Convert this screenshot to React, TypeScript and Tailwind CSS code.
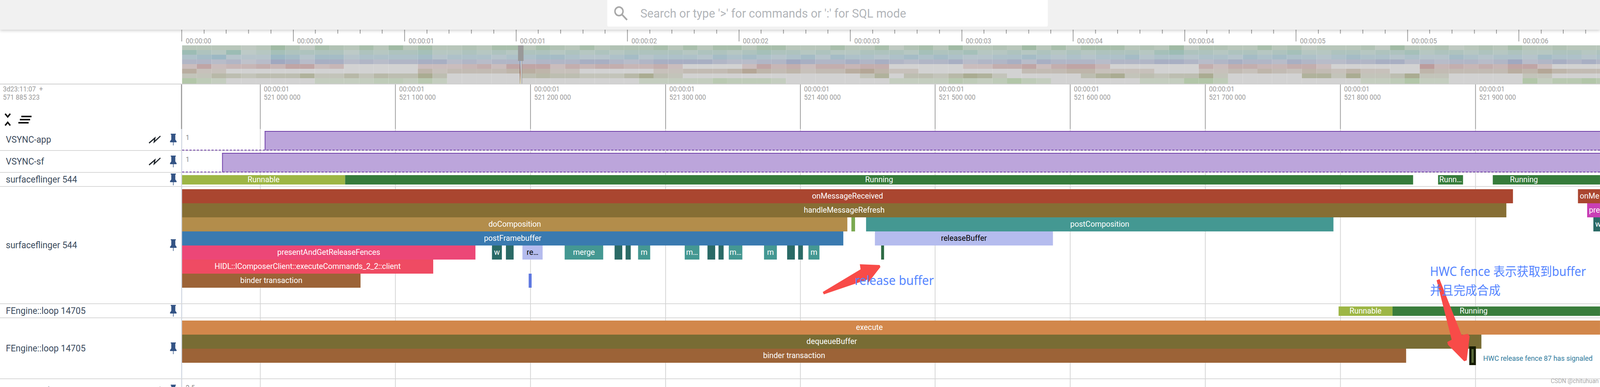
import React from "react";

const X0 = 496;
const EDGE = 4358;
const overviewLabels = ["00:00:00","00:00:00","00:00:01","00:00:01","00:00:02","00:00:02","00:00:03","00:00:03","00:00:04","00:00:04","00:00:05","00:00:05","00:00:06"];
const rulerXs = [708.5,1077,1445,1813,2180,2547,2915,3283,3651,4019];

const heatRows: { strong: number[]; cells: string }[] = [
  { strong: [160,186,164], cells: "2222125314324252" + "422324424324233342424424422" + "242241342522325242444232513" + "322423122231522312324223222" },
  { strong: [156,188,180], cells: "532512433331323" + "3" + "4223232332323233" + "3323323433232233" + "3243342232323233" + "3245332332342233" + "233423323232233232" },
  { strong: [156,184,196], cells: "345222542442333" + "3" + "4233323344322342" + "3332434323424332" + "3434322334323233" + "4233233243433234" + "332322432332433232" },
  { strong: [160,168,192], cells: "332312542442323" + "3" + "4423233233344323" + "4444322335433434" + "3233423342433323" + "3344323433243223" + "344232332352343432" },
  { strong: [188,156,156], cells: "1412232441200000" + "111231444132332231" + "0000" + "1423133233" + "00000" + "1133413442" + "000000" + "313322331" + "000000" + "523232441" + "0000" },
  { strong: [180,166,150], cells: "4110000000000000" + "31222234311" + "00000" + "11" + "222" + "353231" + "2245311" + "0000000" + "222331111" + "000" + "1" + "121321321311" + "00" + "3222224353222" },
  { strong: [170,172,146], cells: "113212224113132" + "252" + "00000" + "23221113521" + "000000000000" + "14" + "0" + "2213541" + "00000" + "245121225" + "1" + "00000" + "44" + "1" + "5" + "11" + "2" + "5" + "11" + "00000" + "11" + "0000" },
  { strong: [172,196,160], cells: "421" + "000000" + "1" + "11122" + "131" + "0000000000000" + "11111" + "32221" + "0000000" + "1111" + "3212421" + "000000" + "111" + "442" + "000000000" + "112" + "4" + "11" + "00000" + "4" + "1" + "3343" },
];

const levels = [0, 0.38, 0.52, 0.66, 0.84, 1];
function heatColor(strong: number[], level: number) {
  const t = levels[level] ?? 0;
  const mix = (v: number) => Math.round(210 + (v - 210) * t);
  return `rgb(${mix(strong[0])},${mix(strong[1])},${mix(strong[2])})`;
}

type Slice = { x1: number; x2: number; row: number; color: string; label?: string; dark?: boolean; left?: boolean; end?: number };

const sfState: Slice[] = [
  { x1: 496, x2: 940, row: 0, color: "bg-[#9db645]", label: "Runnable" },
  { x1: 940, x2: 3849, row: 0, color: "bg-[#367c3b]", label: "Running" },
  { x1: 3917, x2: 3985, row: 0, color: "bg-[#367c3b]", label: "Runn…" },
  { x1: 4066, x2: EDGE, end: 4480, row: 0, color: "bg-[#367c3b]", label: "Running" },
];

const teal = "bg-[#449892]";
const deep = "bg-[#2a6a66]";
const sfMain: Slice[] = [
  { x1: 496, x2: 4121, row: 0, color: "bg-[#aa4630]", label: "onMessageReceived" },
  { x1: 4298, x2: EDGE, row: 0, color: "bg-[#aa4630]", label: "onMe", left: true },
  { x1: 496, x2: 4103, row: 1, color: "bg-[#866e34]", label: "handleMessageRefresh" },
  { x1: 4323, x2: EDGE, row: 1, color: "bg-[#c93fb5]", label: "pre", left: true },
  { x1: 496, x2: 2308, row: 2, color: "bg-[#b38d4b]", label: "doComposition" },
  { x1: 2319, x2: 2329, row: 2, color: "bg-[#7aa950]" },
  { x1: 2359, x2: 3632, row: 2, color: teal, label: "postComposition" },
  { x1: 4340, x2: EDGE, row: 2, color: deep, label: "w", left: true },
  { x1: 496, x2: 2297, row: 3, color: "bg-[#3a7ab0]", label: "postFramebuffer" },
  { x1: 2383, x2: 2868, row: 3, color: "bg-[#b5bcee]", label: "releaseBuffer", dark: true },
  { x1: 496, x2: 1295, row: 4, color: "bg-[#ec4777]", label: "presentAndGetReleaseFences" },
  { x1: 1340, x2: 1367, row: 4, color: deep, label: "w" },
  { x1: 1378, x2: 1399, row: 4, color: deep },
  { x1: 1423, x2: 1478, row: 4, color: "bg-[#b5bcee]", label: "re…", dark: true },
  { x1: 1538, x2: 1643, row: 4, color: teal, label: "merge" },
  { x1: 1674, x2: 1695, row: 4, color: deep },
  { x1: 1704, x2: 1718, row: 4, color: deep },
  { x1: 1738, x2: 1771, row: 4, color: teal, label: "m" },
  { x1: 1865, x2: 1905, row: 4, color: teal, label: "m…" },
  { x1: 1927, x2: 1948, row: 4, color: deep },
  { x1: 1957, x2: 1971, row: 4, color: deep },
  { x1: 1985, x2: 2022, row: 4, color: teal, label: "m…" },
  { x1: 2081, x2: 2116, row: 4, color: teal, label: "m" },
  { x1: 2144, x2: 2165, row: 4, color: deep },
  { x1: 2174, x2: 2187, row: 4, color: deep },
  { x1: 2202, x2: 2232, row: 4, color: teal, label: "m" },
  { x1: 2400, x2: 2408, row: 4, color: "bg-[#2e6b45]" },
  { x1: 496, x2: 1180, row: 5, color: "bg-[#ef4b63]", label: "HIDL::IComposerClient::executeCommands_2_2::client" },
  { x1: 496, x2: 982, row: 6, color: "bg-[#9c6337]", label: "binder transaction" },
  { x1: 1440, x2: 1448, row: 6, color: "bg-[#5e78e0]" },
];

const feState: Slice[] = [
  { x1: 3646, x2: 3793, row: 0, color: "bg-[#9db645]", label: "Runnable" },
  { x1: 3793, x2: EDGE, end: 4481, row: 0, color: "bg-[#3a7d3c]", label: "Running" },
];

const feMain: Slice[] = [
  { x1: 496, x2: EDGE, end: 4476, row: 0, color: "bg-[#d2874b]", label: "execute" },
  { x1: 496, x2: 4035, row: 1, color: "bg-[#786c34]", label: "dequeueBuffer" },
  { x1: 496, x2: 3830, row: 2, color: "bg-[#9c6337]", label: "binder transaction" },
];

function Slices({ items, top, height }: { items: Slice[]; top: number; height: number }) {
  return (
    <>
      {items.map((s, i) => (
        <div
          key={i}
          className={`absolute flex items-center overflow-hidden whitespace-nowrap text-[21px] ${s.color} ${s.dark ? "text-black" : "text-white"} ${s.left ? "justify-start pl-[5px]" : "justify-center"}`}
          style={{
            left: s.x1 - X0,
            width: s.x2 - s.x1,
            top: top + s.row * height,
            height,
            paddingRight: s.end ? s.end - s.x2 : undefined,
          }}
        >
          {s.label}
        </div>
      ))}
    </>
  );
}

function Pin() {
  return (
    <svg width="18" height="30" viewBox="0 0 18 30" className="shrink-0">
      <path d="M2 0h14v2.5h-1.5v12.5l3.5 4.5v2.5H9.8v8H8.2v-8H0v-2.5L3.5 15V2.5H2z" fill="#345485" />
    </svg>
  );
}

function ChartIcon() {
  return (
    <svg width="33" height="22" viewBox="0 0 33 22" className="shrink-0">
      <polyline points="1,20 17,7 15,17 32,2" fill="none" stroke="#1d2329" strokeWidth="3" />
    </svg>
  );
}

function Track({ h, label, chart, children }: { h: string; label: string; chart?: boolean; children?: React.ReactNode }) {
  return (
    <div className={`flex shrink-0 border-b-2 border-[#d8d8d8] ${h}`}>
      <div className="flex w-[496px] shrink-0 items-center border-r-2 border-[#c3cbd9] pl-[16px] pr-[13px]">
        <span className="flex-1 whitespace-nowrap text-[24px] text-[#3c4b5d]">{label}</span>
        {chart && <span className="mr-[25px] flex"><ChartIcon /></span>}
        <Pin />
      </div>
      <div className="relative flex-1">{children}</div>
    </div>
  );
}

function Vsync({ x, top }: { x: number; top: number }) {
  return (
    <>
      <div
        className="absolute right-0 border-l-2 border-t-2 border-[#6f3fa8] bg-[#bca5db]"
        style={{ left: x - X0, top, height: 49 }}
      />
      <div className="absolute inset-x-0 border-b-2 border-dashed border-[#6f3fa8]" style={{ top: top + 48 }} />
      <span className="absolute left-[10px] top-[8px] text-[18px] text-[#888]">1</span>
    </>
  );
}

export default function App() {
  const anno = "[font-family:'Noto_Sans','Noto_Sans_CJK_SC',sans-serif]";
  return (
    <div className="h-[990px] w-full overflow-hidden bg-white">
      <div className="relative flex h-[990px] w-[4358px] origin-top-left scale-x-[0.93987] flex-col overflow-hidden bg-white font-[Roboto]">
        {/* top bar */}
        <div className="relative z-10 flex h-[76px] shrink-0 bg-[#f1f1f1] shadow-[0_2px_8px_rgba(0,0,0,0.22)]">
          <div className="ml-[1654px] flex h-[68px] w-[1200px] items-center rounded-b-[4px] bg-white pl-[18px]">
            <svg width="38" height="38" viewBox="0 0 38 38" className="shrink-0">
              <circle cx="14" cy="14" r="11" fill="none" stroke="#a8a8a8" strokeWidth="4" />
              <line x1="22" y1="22" x2="36" y2="36" stroke="#a8a8a8" strokeWidth="4.5" />
            </svg>
            <span className="ml-[34px] whitespace-nowrap text-[32px] text-[#b2b5b9]">
              Search or type '&gt;' for commands or ':' for SQL mode
            </span>
          </div>
        </div>

        {/* overview */}
        <div className="flex h-[140px] shrink-0 border-b-2 border-[#cfcfcf]">
          <div className="w-[495px] shrink-0" />
          <div className="relative flex-1">
            {overviewLabels.map((t, i) => (
              <React.Fragment key={i}>
                <div className="absolute top-0 h-[30px] w-[2px] bg-[#999]" style={{ left: i * 303.5 - 1 }} />
                {[1, 2, 3, 4].map((m) => (
                  <div key={m} className="absolute top-0 h-[10px] w-[2px] bg-[#999]" style={{ left: i * 303.5 + m * 60.7 - 1 }} />
                ))}
                <span
                  className="absolute top-[18px] whitespace-nowrap text-[18px] leading-[21px] text-[#999]"
                  style={{ left: i * 303.5 + 11 }}
                >
                  {t}
                </span>
              </React.Fragment>
            ))}
            <div className="absolute inset-x-0 top-[40px] flex flex-col overflow-hidden pl-[1px]">
              {heatRows.map((r, ri) => (
                <div key={ri} className="flex h-[12px] last:h-[14px]">
                  {Array.from({ length: 97 }).map((_, c) => (
                    <div
                      key={c}
                      className="h-full w-[40.13px] shrink-0"
                      style={{ backgroundColor: heatColor(r.strong, Number(r.cells[c % r.cells.length])) }}
                    />
                  ))}
                </div>
              ))}
            </div>
            {/* viewport handle */}
            <div className="absolute left-[916px] top-[40px] h-[40px] w-[15px] bg-[#999]" />
            <div className="absolute left-[921px] top-[80px] h-[58px] w-[2px] bg-gradient-to-b from-[#4f7fb8] via-[#7a3a2a] to-[#b5b070]" />
            <div className="absolute left-[923px] top-[80px] h-[58px] w-[2px] bg-white" />
            <div className="absolute left-[925px] top-[80px] h-[58px] w-[2px] bg-[#999]" />
          </div>
        </div>

        {/* ruler */}
        <div className="flex h-[114px] shrink-0">
          <div className="relative w-[496px] shrink-0 border-r-[3px] border-[#999] pl-[8px] pt-[2px] text-[18px] leading-[20.5px] text-[#999]">
            <div className="whitespace-pre">3d23:11:07  +</div>
            <div>571 885 323</div>
            <div className="absolute left-[12px] top-[74px] flex items-start gap-[20px]">
              <svg width="18" height="32" viewBox="0 0 18 32" className="shrink-0">
                <polyline points="2,1 9,9 16,1" fill="none" stroke="#111" strokeWidth="4" />
                <polyline points="2,31 9,23 16,31" fill="none" stroke="#111" strokeWidth="4" />
              </svg>
              <svg width="36" height="20" viewBox="0 0 36 20" className="mt-[6px] shrink-0">
                <rect x="8" y="0" width="28" height="4" fill="#111" />
                <rect x="4" y="8" width="28" height="4" fill="#111" />
                <rect x="0" y="16" width="28" height="4" fill="#111" />
              </svg>
            </div>
          </div>
          <div className="relative flex-1">
            {rulerXs.map((x, i) => (
              <React.Fragment key={i}>
                <div className="absolute inset-y-0 w-[2px] bg-[#999]" style={{ left: x - X0 - 1 }} />
                <div
                  className="absolute top-[2px] whitespace-nowrap text-[18px] leading-[20.5px] text-[#999]"
                  style={{ left: x - X0 + 10 }}
                >
                  <div>00:00:01</div>
                  <div>521 {i}00 000</div>
                </div>
              </React.Fragment>
            ))}
          </div>
        </div>

        {/* tracks */}
        <div className="relative flex-1">
          {/* grid lines lie behind the slices */}
          {rulerXs.map((x, i) => (
            <div key={i} className="absolute inset-y-0 w-[2px] bg-[#d4d4d4]" style={{ left: x - 1 }} />
          ))}
          <Track h="h-[56px]" label="VSYNC-app" chart>
            <Vsync x={721} top={5} />
          </Track>
          <Track h="h-[56px]" label="VSYNC-sf" chart>
            <Vsync x={605} top={5} />
          </Track>
          <Track h="h-[36px]" label="surfaceflinger 544">
            <Slices items={sfState} top={6} height={24} />
          </Track>
          <Track h="h-[300px]" label="surfaceflinger 544">
            <Slices items={sfMain} top={6} height={36} />
          </Track>
          <Track h="h-[36px]" label="FEngine::loop 14705">
            <Slices items={feState} top={6} height={24} />
          </Track>
          <Track h="h-[156px]" label="FEngine::loop 14705">
            <Slices items={feMain} top={6} height={36} />
            <div className="absolute left-[3506px] top-[72px] flex h-[48px] w-[18px] items-center justify-center bg-[#141a00]">
              <div className="h-[35px] w-[6px] bg-[#5a6a3a]" />
            </div>
            <span className="absolute left-[3544px] top-[92px] whitespace-nowrap text-[19px] leading-[22px] text-[#2f7a9c]">
              HWC release fence 87 has signaled
            </span>
          </Track>
          <Track h="h-[60px]" label="GPU completion" chart>
            <span className="absolute left-[10px] top-[8px] text-[18px] text-[#888]">2.5</span>
          </Track>
        </div>

        {/* hand-drawn annotations */}
        <svg className="pointer-events-none absolute left-0 top-0" width="4358" height="990" viewBox="0 0 4358 990">
          <polygon fill="#f84b48" points="2241,747 2344,689 2342,676 2396,678 2398,683 2365,723 2363,715 2244,753" />
          <polygon fill="#f84b48" points="3913,717 3921,714 3981,857 3998,854 4003,860 3995,922 3988,924 3944,882 3942,875 3954,869" />
        </svg>
        <span className={`pointer-events-none absolute left-[2328px] top-[695px] whitespace-nowrap text-[33px] leading-[44px] text-[#5585ff] ${anno}`}>
          release buffer
        </span>
        <div className={`pointer-events-none absolute left-[3895px] top-[670px] whitespace-nowrap text-[32px] leading-[48px] text-[#5585ff] ${anno}`}>
          <div>HWC fence 表示获取到buffer</div>
          <div>并且完成合成</div>
        </div>
        <span className="pointer-events-none absolute left-[4224px] top-[965px] whitespace-nowrap text-[16px] leading-[20px] text-[#aaa]">
          CSDN @chituhuan
        </span>
      </div>
    </div>
  );
}
